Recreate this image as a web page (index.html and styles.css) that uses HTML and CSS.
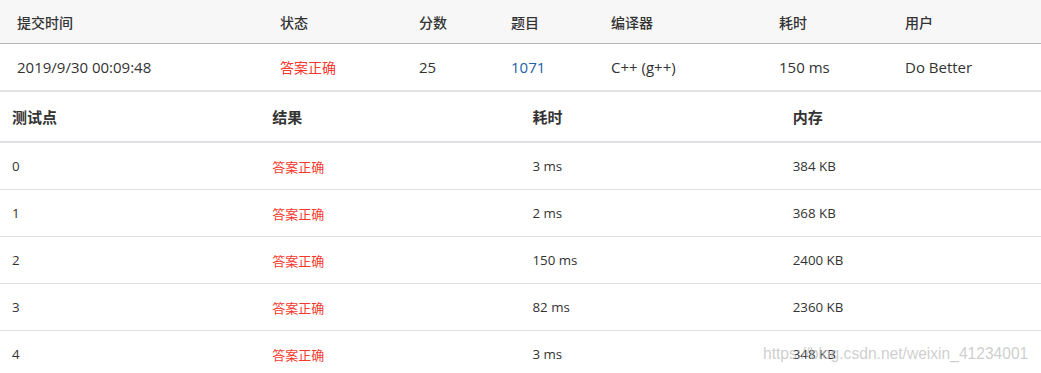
FILE: index.html
```html
<!DOCTYPE html>
<html lang="zh-CN">
<head>
<meta charset="utf-8">
<link rel="stylesheet" href="styles.css">
</head>
<body>
<div class="page">
  <table class="submit">
    <colgroup>
      <col class="c1"><col class="c2"><col class="c3"><col class="c4"><col class="c5"><col class="c6"><col class="c7">
    </colgroup>
    <thead>
      <tr><th>提交时间</th><th>状态</th><th>分数</th><th>题目</th><th>编译器</th><th>耗时</th><th>用户</th></tr>
    </thead>
    <tbody>
      <tr>
        <td>2019/9/30 00:09:48</td>
        <td class="ok">答案正确</td>
        <td>25</td>
        <td class="link">1071</td>
        <td>C++ (g++)</td>
        <td>150 ms</td>
        <td>Do Better</td>
      </tr>
    </tbody>
  </table>
  <table class="cases">
    <thead>
      <tr><th>测试点</th><th>结果</th><th>耗时</th><th>内存</th></tr>
    </thead>
    <tbody>
      <tr><td>0</td><td class="ok">答案正确</td><td>3 ms</td><td>384 KB</td></tr>
      <tr><td>1</td><td class="ok">答案正确</td><td>2 ms</td><td>368 KB</td></tr>
      <tr><td>2</td><td class="ok">答案正确</td><td>150 ms</td><td>2400 KB</td></tr>
      <tr><td>3</td><td class="ok">答案正确</td><td>82 ms</td><td>2360 KB</td></tr>
      <tr><td>4</td><td class="ok">答案正确</td><td>3 ms</td><td>348 KB</td></tr>
    </tbody>
  </table>
  <div class="watermark">https://blog.csdn.net/weixin_41234001</div>
</div>
</body>
</html>
```
FILE: styles.css
```css
html, body {
  margin: 0;
  padding: 0;
  background: #fff;
}
body {
  font-family: "Open Sans", "Noto Sans CJK SC", sans-serif;
  color: #333;
}
.page {
  position: relative;
  width: 1041px;
  height: 373px;
  overflow: hidden;
}
table {
  border-collapse: collapse;
  width: 1041px;
  table-layout: fixed;
}
th, td {
  text-align: left;
  padding: 0;
  white-space: nowrap;
}
.submit .c1 { width: 263px; }
.submit .c2 { width: 139px; }
.submit .c3 { width: 92px; }
.submit .c4 { width: 100px; }
.submit .c5 { width: 168px; }
.submit .c6 { width: 126px; }
.submit .c7 { width: 153px; }
.submit th {
  background: #f7f7f7;
  height: 43px;
  font-size: 14px;
  font-weight: 500;
  padding-left: 17px;
  border-bottom: 1px solid #b4b4b4;
  color: #333;
}
.submit td {
  height: 46px;
  font-size: 15px;
  padding-left: 17px;
  border-bottom: 2px solid #e3e3e6;
}
.submit td.ok { font-size: 14px; }
.ok { color: #f5392f; }
.link { color: #2161a8; }
.cases th {
  height: 49px;
  font-size: 15px;
  font-weight: 700;
  padding-left: 12px;
  border-bottom: 2px solid #e0e0e4;
  color: #333;
}
.cases td {
  height: 46px;
  font-size: 13.3px;
  padding-left: 12px;
  border-bottom: 1px solid #e0e0e2;
}
.cases td.ok { font-size: 13px; }
.watermark {
  position: absolute;
  left: 763px;
  top: 345px;
  font-family: "Liberation Sans", sans-serif;
  font-size: 15.6px;
  color: rgba(190, 190, 190, 0.75);
  white-space: nowrap;
}
```
